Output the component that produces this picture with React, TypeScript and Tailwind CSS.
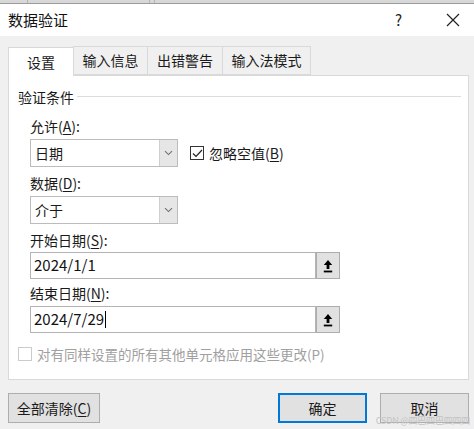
import React from "react";

const font = "font-['Noto_Sans_CJK_SC','Microsoft_YaHei',sans-serif]";

function Chevron() {
  return (
    <svg width="9" height="6" viewBox="0 0 9 6" fill="none">
      <path d="M1 1.2 L4.5 4.6 L8 1.2" stroke="#707070" strokeWidth="1.1" />
    </svg>
  );
}

function Select({ value }: { value: string }) {
  return (
    <div className="flex h-[28px] w-[148px] border border-[#bcbcbc] bg-white">
      <div className="flex flex-1 items-center pl-[4px] text-[14px] text-[#1a1a1a]">{value}</div>
      <div className="flex w-[18px] items-center justify-center border-l border-[#cfcfcf] bg-[#e6e6e6]">
        <Chevron />
      </div>
    </div>
  );
}

function RefIcon() {
  return (
    <svg width="10" height="14" viewBox="0 0 10 14">
      <path d="M5 1 L9.2 6 L6.4 6 L6.4 10 L3.6 10 L3.6 6 L0.8 6 Z" fill="#000" />
      <rect x="0.8" y="11.6" width="8.4" height="1.8" fill="#000" />
    </svg>
  );
}

function RefInput({ value, caret }: { value: string; caret?: boolean }) {
  return (
    <div className="flex h-[27px] w-[310px]">
      <div className="flex flex-1 items-center border border-[#b4b4b4] bg-white pl-[3px] text-[15px] text-[#111]">
        <span>{value}</span>
        {caret && <span className="ml-[1px] inline-block h-[17px] w-[1px] bg-black" />}
      </div>
      <div className="flex w-[24px] items-center justify-center border border-[#adadad] bg-[#e1e1e1]">
        <RefIcon />
      </div>
    </div>
  );
}

function Label({ text, key1, rest }: { text: string; key1: string; rest: string }) {
  return (
    <div className="flex h-[20px] items-center text-[14px] text-[#1a1a1a]">
      {text}(<span className="underline underline-offset-2">{key1}</span>){rest}
    </div>
  );
}

export default function App() {
  const tabs = ["设置", "输入信息", "出错警告", "输入法模式"];
  const tabW = ["w-[65px]", "w-[74px]", "w-[75px]", "w-[89px]"];
  return (
    <div className={`relative flex h-[429px] w-[474px] flex-col overflow-hidden bg-[#f0f0f0] ${font}`}>
      {/* top strip */}
      <div className="flex h-[4px] border-b border-[#9c9c9c] bg-[#d8d8d8]">
        <div className="w-[28px] border-r border-[#b5b5b5]" />
        <div className="w-[122px] border-r border-[#b5b5b5]" />
        <div className="w-[5px] border-r border-[#b5b5b5]" />
      </div>
      {/* title bar */}
      <div className="flex h-[32px] items-center bg-white pl-[8px] pr-[14px]">
        <div className="flex-1 text-[15px] text-[#111]">数据验证</div>
        <div className="mr-[44px] text-[15px] text-[#222]">?</div>
        <svg width="14" height="14" viewBox="0 0 14 14">
          <path d="M1 1 L13 13 M13 1 L1 13" stroke="#222" strokeWidth="1.2" />
        </svg>
      </div>
      {/* body */}
      <div className="flex flex-1 flex-col pl-[8px] pr-[5px] pt-[11px]">
        <div className="flex h-[28px] items-end">
          {tabs.map((t, i) => (
            <div
              key={t}
              className={`flex h-[29px] items-center justify-center border-l border-t border-[#d9d9d9] text-[14px] text-[#1a1a1a] ${tabW[i]} ${
                i === 0 ? "relative z-10 -mb-[1px] bg-white" : "border-b bg-[#f0f0f0]"
              } ${i === 3 ? "border-r" : ""}`}
            >
              {t}
            </div>
          ))}
        </div>
        <div className="flex h-[305px] flex-col border border-[#d9d9d9] bg-white pl-[9px] pt-[11px]">
          <div className="flex h-[20px] items-center pr-[7px]">
            <span className="text-[14px] text-[#1a1a1a]">验证条件</span>
            <div className="ml-[3px] h-[2px] flex-1 border-t border-[#dcdcdc] border-b-white" />
          </div>
          <div className="flex flex-col pl-[12px]">
            <div className="mt-[9px]">
              <Label text="允许" key1="A" rest=":" />
            </div>
            <div className="mt-[3px] flex items-center">
              <Select value="日期" />
              <div className="ml-[12px] flex items-center">
                <div className="flex h-[14px] w-[14px] items-center justify-center border border-[#333]">
                  <svg width="11" height="9" viewBox="0 0 11 9" fill="none">
                    <path d="M1 4.5 L4 7.5 L10 1" stroke="#222" strokeWidth="1.2" />
                  </svg>
                </div>
                <span className="ml-[5px] text-[14px] text-[#1a1a1a]">
                  忽略空值(<span className="underline underline-offset-2">B</span>)
                </span>
              </div>
            </div>
            <div className="mt-[6px]">
              <Label text="数据" key1="D" rest=":" />
            </div>
            <div className="mt-[3px]">
              <Select value="介于" />
            </div>
            <div className="mt-[6px]">
              <Label text="开始日期" key1="S" rest=":" />
            </div>
            <div className="mt-[2px]">
              <RefInput value="2024/1/1" />
            </div>
            <div className="mt-[4px]">
              <Label text="结束日期" key1="N" rest=":" />
            </div>
            <div className="mt-[3px]">
              <RefInput value="2024/7/29" caret />
            </div>
          </div>
          <div className="mt-[11px] flex h-[20px] items-center">
            <div className="h-[14px] w-[14px] border border-[#cccccc]" />
            <span className="ml-[5px] text-[13.5px] text-[#a0a0a0]">对有同样设置的所有其他单元格应用这些更改(P)</span>
          </div>
        </div>
        <div className="mt-[13px] flex items-center">
          <button className="flex h-[30px] w-[92px] items-center justify-center border border-[#adadad] bg-[#e1e1e1] text-[14px] text-[#1a1a1a]">
            全部清除(<span className="underline underline-offset-2">C</span>)
          </button>
          <div className="flex-1" />
          <button className="flex h-[30px] w-[89px] items-center justify-center border-2 border-[#0078d7] bg-[#e1e1e1] text-[14px] text-[#1a1a1a]">
            确定
          </button>
          <button className="ml-[13px] flex h-[30px] w-[89px] items-center justify-center border border-[#adadad] bg-[#e1e1e1] text-[14px] text-[#1a1a1a]">
            取消
          </button>
        </div>
      </div>
      <div className="absolute bottom-[3px] right-[4px] text-[9px] leading-[10px] tracking-tight text-[#c4c4c4]">CSDN @四巴四巴四四四</div>
    </div>
  );
}
